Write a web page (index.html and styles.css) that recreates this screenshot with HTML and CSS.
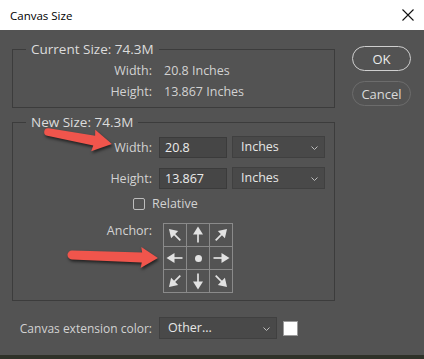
FILE: index.html
```html
<!DOCTYPE html>
<html lang="en">
<head>
    <meta charset="UTF-8">
    <title>Canvas Size</title>
    <link rel="stylesheet" href="styles.css">
</head>
<body>
<div class="dialog">
    <div class="titlebar">
        <span class="title">Canvas Size</span>
        <svg class="close" width="12" height="12" viewBox="0 0 12 12">
            <path d="M0.5 0.5 L11.5 11.5 M11.5 0.5 L0.5 11.5" stroke="#111" stroke-width="1.1" fill="none"/>
        </svg>
    </div>

    <div class="content">
        <div class="main">
            <fieldset class="group current">
                <legend>Current Size: 74.3M</legend>
                <div class="rows">
                    <div class="row"><span class="label">Width:</span><span class="value">20.8 Inches</span></div>
                    <div class="row"><span class="label">Height:</span><span class="value">13.867 Inches</span></div>
                </div>
            </fieldset>

            <fieldset class="group new">
                <legend>New Size: 74.3M</legend>
                <div class="field-row first">
                    <label class="label">Width:</label>
                    <div class="input">20.8</div>
                    <div class="select units">Inches
                        <svg class="chev" width="7" height="4" viewBox="0 0 7 4"><path d="M0.5 0.5 L3.5 3.5 L6.5 0.5" stroke="#bdbdbd" fill="none"/></svg>
                    </div>
                </div>
                <div class="field-row">
                    <label class="label">Height:</label>
                    <div class="input">13.867</div>
                    <div class="select units">Inches
                        <svg class="chev" width="7" height="4" viewBox="0 0 7 4"><path d="M0.5 0.5 L3.5 3.5 L6.5 0.5" stroke="#bdbdbd" fill="none"/></svg>
                    </div>
                </div>
                <div class="check-row">
                    <span class="checkbox"></span>
                    <span class="check-label">Relative</span>
                </div>
                <div class="anchor-row">
                    <span class="label">Anchor:</span>
                    <div class="anchor-grid">
                        <div class="cell"><svg class="dir nw" viewBox="0 0 22 22"><use href="#arr"/></svg></div>
                        <div class="cell"><svg class="dir n" viewBox="0 0 22 22"><use href="#arr"/></svg></div>
                        <div class="cell"><svg class="dir ne" viewBox="0 0 22 22"><use href="#arr"/></svg></div>
                        <div class="cell"><svg class="dir w" viewBox="0 0 22 22"><use href="#arr"/></svg></div>
                        <div class="cell"><span class="dot"></span></div>
                        <div class="cell"><svg class="dir e" viewBox="0 0 22 22"><use href="#arr"/></svg></div>
                        <div class="cell"><svg class="dir sw" viewBox="0 0 22 22"><use href="#arr"/></svg></div>
                        <div class="cell"><svg class="dir s" viewBox="0 0 22 22"><use href="#arr"/></svg></div>
                        <div class="cell"><svg class="dir se" viewBox="0 0 22 22"><use href="#arr"/></svg></div>
                    </div>
                </div>
            </fieldset>

            <div class="ext-row">
                <span class="label">Canvas extension color:</span>
                <div class="select ext">Other...
                    <svg class="chev" width="7" height="4" viewBox="0 0 7 4"><path d="M0.5 0.5 L3.5 3.5 L6.5 0.5" stroke="#bdbdbd" fill="none"/></svg>
                </div>
                <span class="swatch"></span>
            </div>
        </div>

        <div class="buttons">
            <button type="button" class="btn ok">OK</button>
            <button type="button" class="btn cancel">Cancel</button>
        </div>
    </div>

    <!-- red callout arrows drawn over the dialog -->
    <svg class="callouts" width="424" height="359" viewBox="0 0 424 359">
        <defs>
            <symbol id="arr" viewBox="0 0 22 22">
                <path d="M3.5 11 H13" stroke="#e2e2e2" stroke-width="1.7"/>
                <path d="M11.5 6 L19.5 11 L11.5 16 Z" fill="#e2e2e2"/>
            </symbol>
        </defs>
        <g transform="translate(48 132) rotate(10.6)">
            <path d="M0 -3.8 L47 -5 L46 -11 L65 0 L46 11 L47 5 L0 3.8 A3.8 3.8 0 0 1 0 -3.8 Z"/>
        </g>
        <g transform="translate(72 255) rotate(2)">
            <path d="M0 -4.5 L70 -5 L69 -10.5 L86 0 L69 10.5 L70 5 L0 4.5 A4.5 4.5 0 0 1 0 -4.5 Z"/>
        </g>
    </svg>

    <div class="backdrop"></div>
</div>
</body>
</html>
```

FILE: styles.css
```css
/* Photoshop canvas size dialog */
body {
    margin: 0;
    width: 424px;
    height: 359px;
    overflow: hidden;
    background-color: #2f3229;
    font-family: "Open Sans", "Noto Sans", sans-serif;
    font-size: 12.5px;
    color: #d2d2d2;
}
.dialog {
    position: relative;
    width: 424px;
    height: 359px;
}
.titlebar {
    height: 30px;
    background-color: #fff;
    display: flex;
    align-items: center;
    justify-content: space-between;
    padding: 0 10px;
    box-sizing: border-box;
    color: #000;
    font-size: 11.5px;
}
.content {
    height: 325px;
    background-color: #535353;
    display: flex;
    padding: 11px 0 0 12px;
    box-sizing: border-box;
}
.main {
    width: 323px;
}
.group {
    margin: 0;
    padding: 0;
    border: 1px solid #3c3c3c;
    min-width: 0;
}
.group legend {
    margin-left: 13px;
    padding: 0 5px;
    line-height: 16px;
    font-size: 13.5px;
    color: #dcdcdc;
}
.label {
    width: 139px;
    text-align: right;
    flex-shrink: 0;
}
.current .rows {
    padding: 3px 0 5px;
}
.current .row {
    display: flex;
    height: 21px;
    line-height: 21px;
}
.current .value {
    margin-left: 12px;
}
.new {
    margin-top: 6px;
    padding-bottom: 7px;
}
.field-row {
    display: flex;
    align-items: center;
    height: 22px;
    margin-top: 9px;
}
.field-row.first {
    margin-top: 6px;
}
.input {
    margin-left: 7px;
    width: 68px;
    height: 21px;
    box-sizing: border-box;
    border: 1px solid #3b3b3b;
    background-color: #464646;
    color: #ececec;
    padding-left: 5px;
    line-height: 19px;
}
.select {
    position: relative;
    height: 22px;
    box-sizing: border-box;
    border: 1px solid #404040;
    background-color: #494949;
    color: #e6e6e6;
    padding-left: 8px;
    line-height: 20px;
}
.select .chev {
    position: absolute;
    right: 6px;
    top: 9px;
}
.units {
    margin-left: 5px;
    width: 93px;
}
.check-row {
    display: flex;
    align-items: center;
    height: 19px;
    margin-top: 5px;
}
.checkbox {
    margin-left: 120px;
    width: 12px;
    height: 12px;
    box-sizing: border-box;
    border: 1px solid #bdbdbd;
    border-radius: 2px;
}
.check-label {
    margin-left: 7px;
}
.anchor-row {
    display: flex;
    align-items: flex-start;
    margin-top: 10px;
}
.anchor-row .label {
    line-height: 16px;
}
.anchor-grid {
    margin-left: 11px;
    display: grid;
    grid-template-columns: repeat(3, 22px);
    grid-template-rows: repeat(3, 22px);
    gap: 1px;
    border: 1px solid #8a8a8a;
    background-color: #8a8a8a;
}
.cell {
    background-color: #535353;
    display: flex;
    align-items: center;
    justify-content: center;
}
.dir {
    width: 22px;
    height: 22px;
}
.dir.e { transform: rotate(0deg); }
.dir.se { transform: rotate(45deg); }
.dir.s { transform: rotate(90deg); }
.dir.sw { transform: rotate(135deg); }
.dir.w { transform: rotate(180deg); }
.dir.nw { transform: rotate(225deg); }
.dir.n { transform: rotate(270deg); }
.dir.ne { transform: rotate(315deg); }
.dot {
    width: 7px;
    height: 7px;
    border-radius: 50%;
    background-color: #e2e2e2;
}
.ext-row {
    display: flex;
    align-items: center;
    height: 22px;
    margin-top: 16px;
}
.ext-row .label {
    width: 140px;
    font-size: 12px;
}
.ext {
    margin-left: 7px;
    width: 118px;
}
.swatch {
    margin-left: 6px;
    width: 15px;
    height: 15px;
    background-color: #fff;
    border: 1px solid #9a9a9a;
    box-sizing: border-box;
}
.buttons {
    margin-left: 17px;
    display: flex;
    flex-direction: column;
}
.btn {
    width: 59px;
    height: 25px;
    border-radius: 13px;
    background-color: transparent;
    font-family: inherit;
    font-size: 13px;
    padding: 0;
}
.ok {
    margin-top: 5px;
    border: 1.5px solid #cfcfcf;
    color: #ececec;
}
.cancel {
    margin-top: 10px;
    border: 1.5px solid #6c6c6c;
    color: #dadada;
}
.callouts {
    position: absolute;
    left: 0;
    top: 0;
    fill: #f0554c;
    filter: drop-shadow(1px 2px 1.5px rgba(0, 0, 0, 0.6));
    pointer-events: none;
}
.backdrop {
    height: 4px;
}
```
